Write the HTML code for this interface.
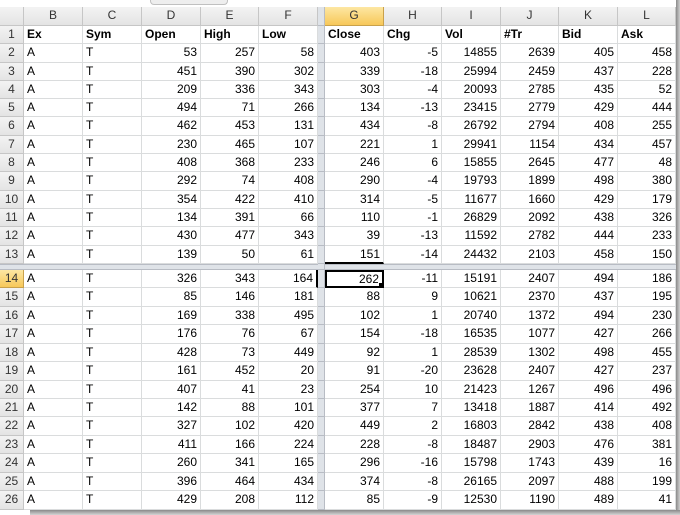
<!DOCTYPE html>
<html><head><meta charset="utf-8"><style>
body{margin:0;width:680px;height:515px;background:#fff;overflow:hidden;position:relative;font-family:"Liberation Sans",Arial,sans-serif;font-size:12px;color:#000}
.top{position:absolute;left:0;top:0;width:680px;height:7px;background:#fff;border-bottom:1px solid #c5c5c5}
.tab{position:absolute;left:150px;top:0;width:76px;height:4px;border:1px solid #c0c0c0;border-top:none;border-radius:0 0 4px 4px;background:#eee}
.g{position:absolute;left:0;top:7px;display:grid;grid-template-columns:24px 59px 59px 59px 58px 59px 7px 59px 58px 59px 58px 59px 58px;grid-template-rows:19px repeat(13,18.3px) 6px repeat(13,18.46px)}
.g>div{border-right:1px solid #dadcdd;border-bottom:1px solid #dadcdd;box-sizing:border-box;padding:0 3px;line-height:17px;white-space:nowrap;overflow:hidden}
.g>.h{background:linear-gradient(#f3f3f3,#e4e4e4);border-color:#c6c6c6;text-align:center;color:#333;padding:0}
.g>.r{background:linear-gradient(#f3f3f3,#e4e4e4);border-color:#c6c6c6;text-align:center;color:#333;padding:0;font-size:12px}
.g>.s{background:#dfe3e8;border-color:#b8bcc4;padding:0}
.g>.hs{background:#dfe3e8;border-bottom:1px solid #b8bcc4;border-top:1px solid #b8bcc4;border-right:none;padding:0}
.g>.sel{background:linear-gradient(#fde7a3,#f7c85a);border-color:#c9a14b}
.n{text-align:right}
.b{font-weight:bold}
.rs{position:absolute;left:676px;top:0;width:4px;height:515px;background:linear-gradient(90deg,#8a8a8a,#cfcfcf)}
.bs{position:absolute;left:30px;top:510px;width:650px;height:5px;background:linear-gradient(#8a8a8a,#d5d5d5)}
</style></head><body>
<div class="top"><div class="tab"></div></div>
<div class="g" id="g">
<div class="h"></div><div class="h">B</div><div class="h">C</div><div class="h">D</div><div class="h">E</div><div class="h">F</div><div class="s"></div><div class="h sel">G</div><div class="h">H</div><div class="h">I</div><div class="h">J</div><div class="h">K</div><div class="h">L</div>
<div class="r">1</div><div class="b">Ex</div><div class="b">Sym</div><div class="b">Open</div><div class="b">High</div><div class="b">Low</div><div class="s"></div><div class="b">Close</div><div class="b">Chg</div><div class="b">Vol</div><div class="b">#Tr</div><div class="b">Bid</div><div class="b">Ask</div>
<div class="r">2</div><div>A</div><div>T</div><div class="n">53</div><div class="n">257</div><div class="n">58</div><div class="s"></div><div class="n">403</div><div class="n">-5</div><div class="n">14855</div><div class="n">2639</div><div class="n">405</div><div class="n">458</div>
<div class="r">3</div><div>A</div><div>T</div><div class="n">451</div><div class="n">390</div><div class="n">302</div><div class="s"></div><div class="n">339</div><div class="n">-18</div><div class="n">25994</div><div class="n">2459</div><div class="n">437</div><div class="n">228</div>
<div class="r">4</div><div>A</div><div>T</div><div class="n">209</div><div class="n">336</div><div class="n">343</div><div class="s"></div><div class="n">303</div><div class="n">-4</div><div class="n">20093</div><div class="n">2785</div><div class="n">435</div><div class="n">52</div>
<div class="r">5</div><div>A</div><div>T</div><div class="n">494</div><div class="n">71</div><div class="n">266</div><div class="s"></div><div class="n">134</div><div class="n">-13</div><div class="n">23415</div><div class="n">2779</div><div class="n">429</div><div class="n">444</div>
<div class="r">6</div><div>A</div><div>T</div><div class="n">462</div><div class="n">453</div><div class="n">131</div><div class="s"></div><div class="n">434</div><div class="n">-8</div><div class="n">26792</div><div class="n">2794</div><div class="n">408</div><div class="n">255</div>
<div class="r">7</div><div>A</div><div>T</div><div class="n">230</div><div class="n">465</div><div class="n">107</div><div class="s"></div><div class="n">221</div><div class="n">1</div><div class="n">29941</div><div class="n">1154</div><div class="n">434</div><div class="n">457</div>
<div class="r">8</div><div>A</div><div>T</div><div class="n">408</div><div class="n">368</div><div class="n">233</div><div class="s"></div><div class="n">246</div><div class="n">6</div><div class="n">15855</div><div class="n">2645</div><div class="n">477</div><div class="n">48</div>
<div class="r">9</div><div>A</div><div>T</div><div class="n">292</div><div class="n">74</div><div class="n">408</div><div class="s"></div><div class="n">290</div><div class="n">-4</div><div class="n">19793</div><div class="n">1899</div><div class="n">498</div><div class="n">380</div>
<div class="r">10</div><div>A</div><div>T</div><div class="n">354</div><div class="n">422</div><div class="n">410</div><div class="s"></div><div class="n">314</div><div class="n">-5</div><div class="n">11677</div><div class="n">1660</div><div class="n">429</div><div class="n">179</div>
<div class="r">11</div><div>A</div><div>T</div><div class="n">134</div><div class="n">391</div><div class="n">66</div><div class="s"></div><div class="n">110</div><div class="n">-1</div><div class="n">26829</div><div class="n">2092</div><div class="n">438</div><div class="n">326</div>
<div class="r">12</div><div>A</div><div>T</div><div class="n">430</div><div class="n">477</div><div class="n">343</div><div class="s"></div><div class="n">39</div><div class="n">-13</div><div class="n">11592</div><div class="n">2782</div><div class="n">444</div><div class="n">233</div>
<div class="r">13</div><div>A</div><div>T</div><div class="n">139</div><div class="n">50</div><div class="n">61</div><div class="s"></div><div class="n" style="border-bottom:2px solid #000">151</div><div class="n">-14</div><div class="n">24432</div><div class="n">2103</div><div class="n">458</div><div class="n">150</div>
<div class="hs"></div><div class="hs"></div><div class="hs"></div><div class="hs"></div><div class="hs"></div><div class="hs"></div><div class="s"></div><div class="hs"></div><div class="hs"></div><div class="hs"></div><div class="hs"></div><div class="hs"></div><div class="hs"></div>
<div class="r sel">14</div><div>A</div><div>T</div><div class="n">326</div><div class="n">343</div><div class="n" style="border-right:2px solid #000">164</div><div class="s"></div><div class="n" style="border:2px solid #000;line-height:15px;position:relative">262<span style="position:absolute;right:-3px;bottom:-3px;width:5px;height:5px;background:#000;border:1px solid #fff"></span></div><div class="n">-11</div><div class="n">15191</div><div class="n">2407</div><div class="n">494</div><div class="n">186</div>
<div class="r">15</div><div>A</div><div>T</div><div class="n">85</div><div class="n">146</div><div class="n">181</div><div class="s"></div><div class="n">88</div><div class="n">9</div><div class="n">10621</div><div class="n">2370</div><div class="n">437</div><div class="n">195</div>
<div class="r">16</div><div>A</div><div>T</div><div class="n">169</div><div class="n">338</div><div class="n">495</div><div class="s"></div><div class="n">102</div><div class="n">1</div><div class="n">20740</div><div class="n">1372</div><div class="n">494</div><div class="n">230</div>
<div class="r">17</div><div>A</div><div>T</div><div class="n">176</div><div class="n">76</div><div class="n">67</div><div class="s"></div><div class="n">154</div><div class="n">-18</div><div class="n">16535</div><div class="n">1077</div><div class="n">427</div><div class="n">266</div>
<div class="r">18</div><div>A</div><div>T</div><div class="n">428</div><div class="n">73</div><div class="n">449</div><div class="s"></div><div class="n">92</div><div class="n">1</div><div class="n">28539</div><div class="n">1302</div><div class="n">498</div><div class="n">455</div>
<div class="r">19</div><div>A</div><div>T</div><div class="n">161</div><div class="n">452</div><div class="n">20</div><div class="s"></div><div class="n">91</div><div class="n">-20</div><div class="n">23628</div><div class="n">2407</div><div class="n">427</div><div class="n">237</div>
<div class="r">20</div><div>A</div><div>T</div><div class="n">407</div><div class="n">41</div><div class="n">23</div><div class="s"></div><div class="n">254</div><div class="n">10</div><div class="n">21423</div><div class="n">1267</div><div class="n">496</div><div class="n">496</div>
<div class="r">21</div><div>A</div><div>T</div><div class="n">142</div><div class="n">88</div><div class="n">101</div><div class="s"></div><div class="n">377</div><div class="n">7</div><div class="n">13418</div><div class="n">1887</div><div class="n">414</div><div class="n">492</div>
<div class="r">22</div><div>A</div><div>T</div><div class="n">327</div><div class="n">102</div><div class="n">420</div><div class="s"></div><div class="n">449</div><div class="n">2</div><div class="n">16803</div><div class="n">2842</div><div class="n">438</div><div class="n">408</div>
<div class="r">23</div><div>A</div><div>T</div><div class="n">411</div><div class="n">166</div><div class="n">224</div><div class="s"></div><div class="n">228</div><div class="n">-8</div><div class="n">18487</div><div class="n">2903</div><div class="n">476</div><div class="n">381</div>
<div class="r">24</div><div>A</div><div>T</div><div class="n">260</div><div class="n">341</div><div class="n">165</div><div class="s"></div><div class="n">296</div><div class="n">-16</div><div class="n">15798</div><div class="n">1743</div><div class="n">439</div><div class="n">16</div>
<div class="r">25</div><div>A</div><div>T</div><div class="n">396</div><div class="n">464</div><div class="n">434</div><div class="s"></div><div class="n">374</div><div class="n">-8</div><div class="n">26165</div><div class="n">2097</div><div class="n">488</div><div class="n">199</div>
<div class="r">26</div><div>A</div><div>T</div><div class="n">429</div><div class="n">208</div><div class="n">112</div><div class="s"></div><div class="n">85</div><div class="n">-9</div><div class="n">12530</div><div class="n">1190</div><div class="n">489</div><div class="n">41</div>
</div>
<div class="rs"></div><div class="bs"></div>
</body></html>
